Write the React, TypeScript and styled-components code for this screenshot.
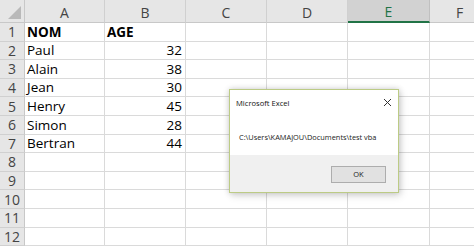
import React from "react";
import styled, { createGlobalStyle } from "styled-components";

const Global = createGlobalStyle`
  html, body { margin: 0; padding: 0; background: #fff; overflow: hidden; }
  body { font-family: "Open Sans", "Liberation Sans", sans-serif; }
`;

const Sheet = styled.div`
  position: relative;
  width: 474px;
  height: 247px;
  overflow: hidden;
  background: #fff;
`;

const Grid = styled.div`
  display: grid;
  grid-template-columns: 25px 80px 81px 81px 81px 82px 60px;
  grid-template-rows: 23px repeat(12, 18.6px);
`;

const Corner = styled.div`
  background: #e6e6e6;
  border-right: 1px solid #c8c8c8;
  border-bottom: 1px solid #c8c8c8;
  box-sizing: border-box;
  position: relative;
  &::after {
    content: "";
    position: absolute;
    right: 3px;
    bottom: 3px;
    width: 0;
    height: 0;
    border-left: 13px solid transparent;
    border-bottom: 13px solid #b9b9b9;
  }
`;

const ColHead = styled.div<{ $sel?: boolean }>`
  background: ${(p) => (p.$sel ? "#d2d2d2" : "#e6e6e6")};
  border-right: 1px solid ${(p) => (p.$sel ? "#c0c0c0" : "#d0d0d0")};
  border-bottom: ${(p) => (p.$sel ? "2px solid #217346" : "1px solid #c8c8c8")};
  box-sizing: border-box;
  display: flex;
  align-items: center;
  justify-content: center;
  padding-top: 2px;
  font-size: 14px;
  color: ${(p) => (p.$sel ? "#217346" : "#444")};
`;

const RowHead = styled.div`
  background: #e6e6e6;
  border-right: 1px solid #c8c8c8;
  border-bottom: 1px solid #d0d0d0;
  box-sizing: border-box;
  display: flex;
  align-items: center;
  justify-content: center;
  font-size: 14px;
  color: #444;
`;

const Cell = styled.div<{ $num?: boolean; $bold?: boolean }>`
  border-right: 1px solid #dadada;
  border-bottom: 1px solid #dadada;
  box-sizing: border-box;
  display: flex;
  align-items: flex-end;
  justify-content: ${(p) => (p.$num ? "flex-end" : "flex-start")};
  padding: 0 3px 0 2px;
  font-size: 13.5px;
  line-height: 17px;
  font-weight: ${(p) => (p.$bold ? 700 : 400)};
  color: #000;
  white-space: nowrap;
`;

const Dialog = styled.div`
  position: absolute;
  left: 229px;
  top: 89px;
  width: 170px;
  height: 104px;
  box-sizing: border-box;
  border: 1px solid #bccb85;
  background: #fff;
  box-shadow: 0 0 6px rgba(0, 0, 0, 0.18), 2px 3px 8px rgba(0, 0, 0, 0.12);
  display: flex;
  flex-direction: column;
  font-family: "Open Sans", "Liberation Sans", sans-serif;
`;

const TitleBar = styled.div`
  height: 25px;
  display: flex;
  align-items: center;
  justify-content: space-between;
  padding: 0 6px 0 6px;
  font-size: 7.6px;
  color: #111;
`;

const Message = styled.div`
  flex: 1;
  padding: 17px 0 0 9px;
  font-size: 7.4px;
  color: #222;
  white-space: nowrap;
`;

const Footer = styled.div`
  height: 37px;
  background: #f0f0f0;
  display: flex;
  align-items: center;
  justify-content: flex-end;
  padding-right: 12px;
`;

const OkButton = styled.div`
  width: 55px;
  height: 17px;
  box-sizing: border-box;
  border: 1px solid #adadad;
  background: #e1e1e1;
  display: flex;
  align-items: center;
  justify-content: center;
  font-size: 7.5px;
  color: #222;
  margin-top: 1px;
`;

const cols = ["A", "B", "C", "D", "E", "F"];
const data: [string, string][] = [
  ["NOM", "AGE"],
  ["Paul", "32"],
  ["Alain", "38"],
  ["Jean", "30"],
  ["Henry", "45"],
  ["Simon", "28"],
  ["Bertran", "44"],
];

export default function App() {
  const rows = Array.from({ length: 12 }, (_, i) => i + 1);
  return (
    <>
      <Global />
      <Sheet>
        <Grid>
          <Corner />
          {cols.map((c) => (
            <ColHead key={c} $sel={c === "E"}>
              {c}
            </ColHead>
          ))}
          {rows.map((r) => {
            const d = data[r - 1];
            return (
              <React.Fragment key={r}>
                <RowHead>{r}</RowHead>
                <Cell $bold={r === 1}>{d ? d[0] : ""}</Cell>
                <Cell $bold={r === 1} $num={r !== 1}>
                  {d ? d[1] : ""}
                </Cell>
                <Cell />
                <Cell />
                <Cell />
                <Cell />
              </React.Fragment>
            );
          })}
        </Grid>
        <Dialog>
          <TitleBar>
            <span>Microsoft Excel</span>
            <svg width="9" height="9" viewBox="0 0 9 9">
              <path d="M1 1L8 8M8 1L1 8" stroke="#333" strokeWidth="1" />
            </svg>
          </TitleBar>
          <Message>C:\Users\KAMAJOU\Documents\test vba</Message>
          <Footer>
            <OkButton>OK</OkButton>
          </Footer>
        </Dialog>
      </Sheet>
    </>
  );
}
